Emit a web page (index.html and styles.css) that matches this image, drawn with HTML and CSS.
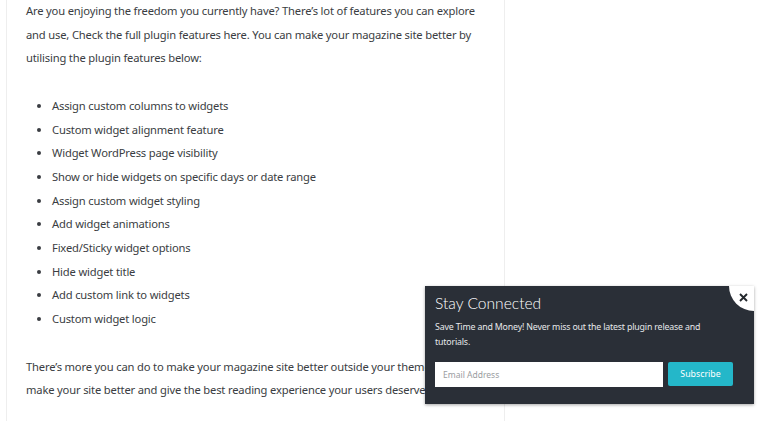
FILE: index.html
```html
<!DOCTYPE html>
<html lang="en">
  <head>
    <meta charset="UTF-8" />
    <meta name="viewport" content="width=device-width, initial-scale=1.0" />
    <title>Plugin features</title>
    <link rel="stylesheet" href="styles.css">
  </head>
  <body>
    <div class="article">
      <p>
        Are you enjoying the freedom you currently have? There’s lot of features you can explore<br>
        and use, Check the full plugin features here. You can make your magazine site better by<br>
        utilising the plugin features below:
      </p>
      <ul>
        <li>Assign custom columns to widgets</li>
        <li>Custom widget alignment feature</li>
        <li>Widget WordPress page visibility</li>
        <li>Show or hide widgets on specific days or date range</li>
        <li>Assign custom widget styling</li>
        <li>Add widget animations</li>
        <li>Fixed/Sticky widget options</li>
        <li>Hide widget title</li>
        <li>Add custom link to widgets</li>
        <li>Custom widget logic</li>
      </ul>
      <p>
        There’s more you can do to make your magazine site better outside your theme. You can<br>
        make your site better and give the best reading experience your users deserve.
      </p>
    </div>

    <div class="popup">
      <button type="button" class="popup-close" aria-label="Close">
        <svg width="9" height="9" viewBox="0 0 9 9">
          <path d="M1 1l7 7M8 1l-7 7" stroke="#23282d" stroke-width="1.9" fill="none" />
        </svg>
      </button>
      <h2>Stay Connected</h2>
      <p>Save Time and Money! Never miss out the latest plugin release and tutorials.</p>
      <form class="popup-form">
        <input type="text" placeholder="Email Address" />
        <button type="button" class="subscribe">Subscribe</button>
      </form>
    </div>
  </body>
</html>
```

FILE: styles.css
```css
html,
body {
  height: 100%;
}
body {
  font-family: "Noto Sans", Arial, sans-serif;
  background-color: #fff;
  color: #3a3d42;
  margin: 0;
  padding: 0;
  overflow: hidden;
}
.article {
  width: 478px;
  height: 422px;
  margin-left: 6px;
  margin-top: -1px;
  padding: 0 0 0 19px;
  border-left: 1px solid #eeeeee;
  border-right: 1px solid #eeeeee;
  font-size: 11.2px;
  letter-spacing: -0.17px;
  line-height: 23.7px;
  white-space: nowrap;
}
.article p {
  margin: 0;
}
.article ul {
  margin: 23.7px 0;
  padding: 0 0 0 26px;
  list-style: disc;
}
.popup {
  position: absolute;
  left: 425px;
  top: 286px;
  width: 309px;
  height: 118px;
  padding: 0 9.5px 0 10px;
  background-color: #2a2f37;
  color: #fff;
  box-shadow: 0 1px 3px rgba(0, 0, 0, 0.35);
}
.popup h2 {
  margin: 0;
  padding-top: 7px;
  font-family: Lato, "Noto Sans", Arial, sans-serif;
  font-size: 15.6px;
  line-height: 21px;
  font-weight: 300;
}
.popup p {
  margin: 6px 0 0;
  width: 285px;
  font-size: 8.8px;
  letter-spacing: -0.17px;
  line-height: 14.5px;
  color: #e6e8ea;
}
.popup-close {
  position: absolute;
  right: 0;
  top: 0;
  width: 25px;
  height: 25px;
  padding: 0 0 3px 5px;
  border: none;
  border-bottom-left-radius: 25px;
  background-color: #fff;
  display: flex;
  align-items: center;
  justify-content: center;
}
.popup-form {
  display: flex;
  gap: 5px;
  margin-top: 13px;
}
.popup-form input {
  width: 228px;
  height: 25px;
  box-sizing: border-box;
  padding: 0 8px;
  border: none;
  background-color: #fff;
  font-family: "Noto Sans", Arial, sans-serif;
  font-size: 8.5px;
}
.popup-form input::placeholder {
  color: #9a9da1;
}
.subscribe {
  width: 65px;
  height: 24px;
  padding: 0;
  border: none;
  border-radius: 2px;
  background-color: #24b7c9;
  color: #fff;
  font-family: "Noto Sans", Arial, sans-serif;
  font-size: 8.8px;
}
```
